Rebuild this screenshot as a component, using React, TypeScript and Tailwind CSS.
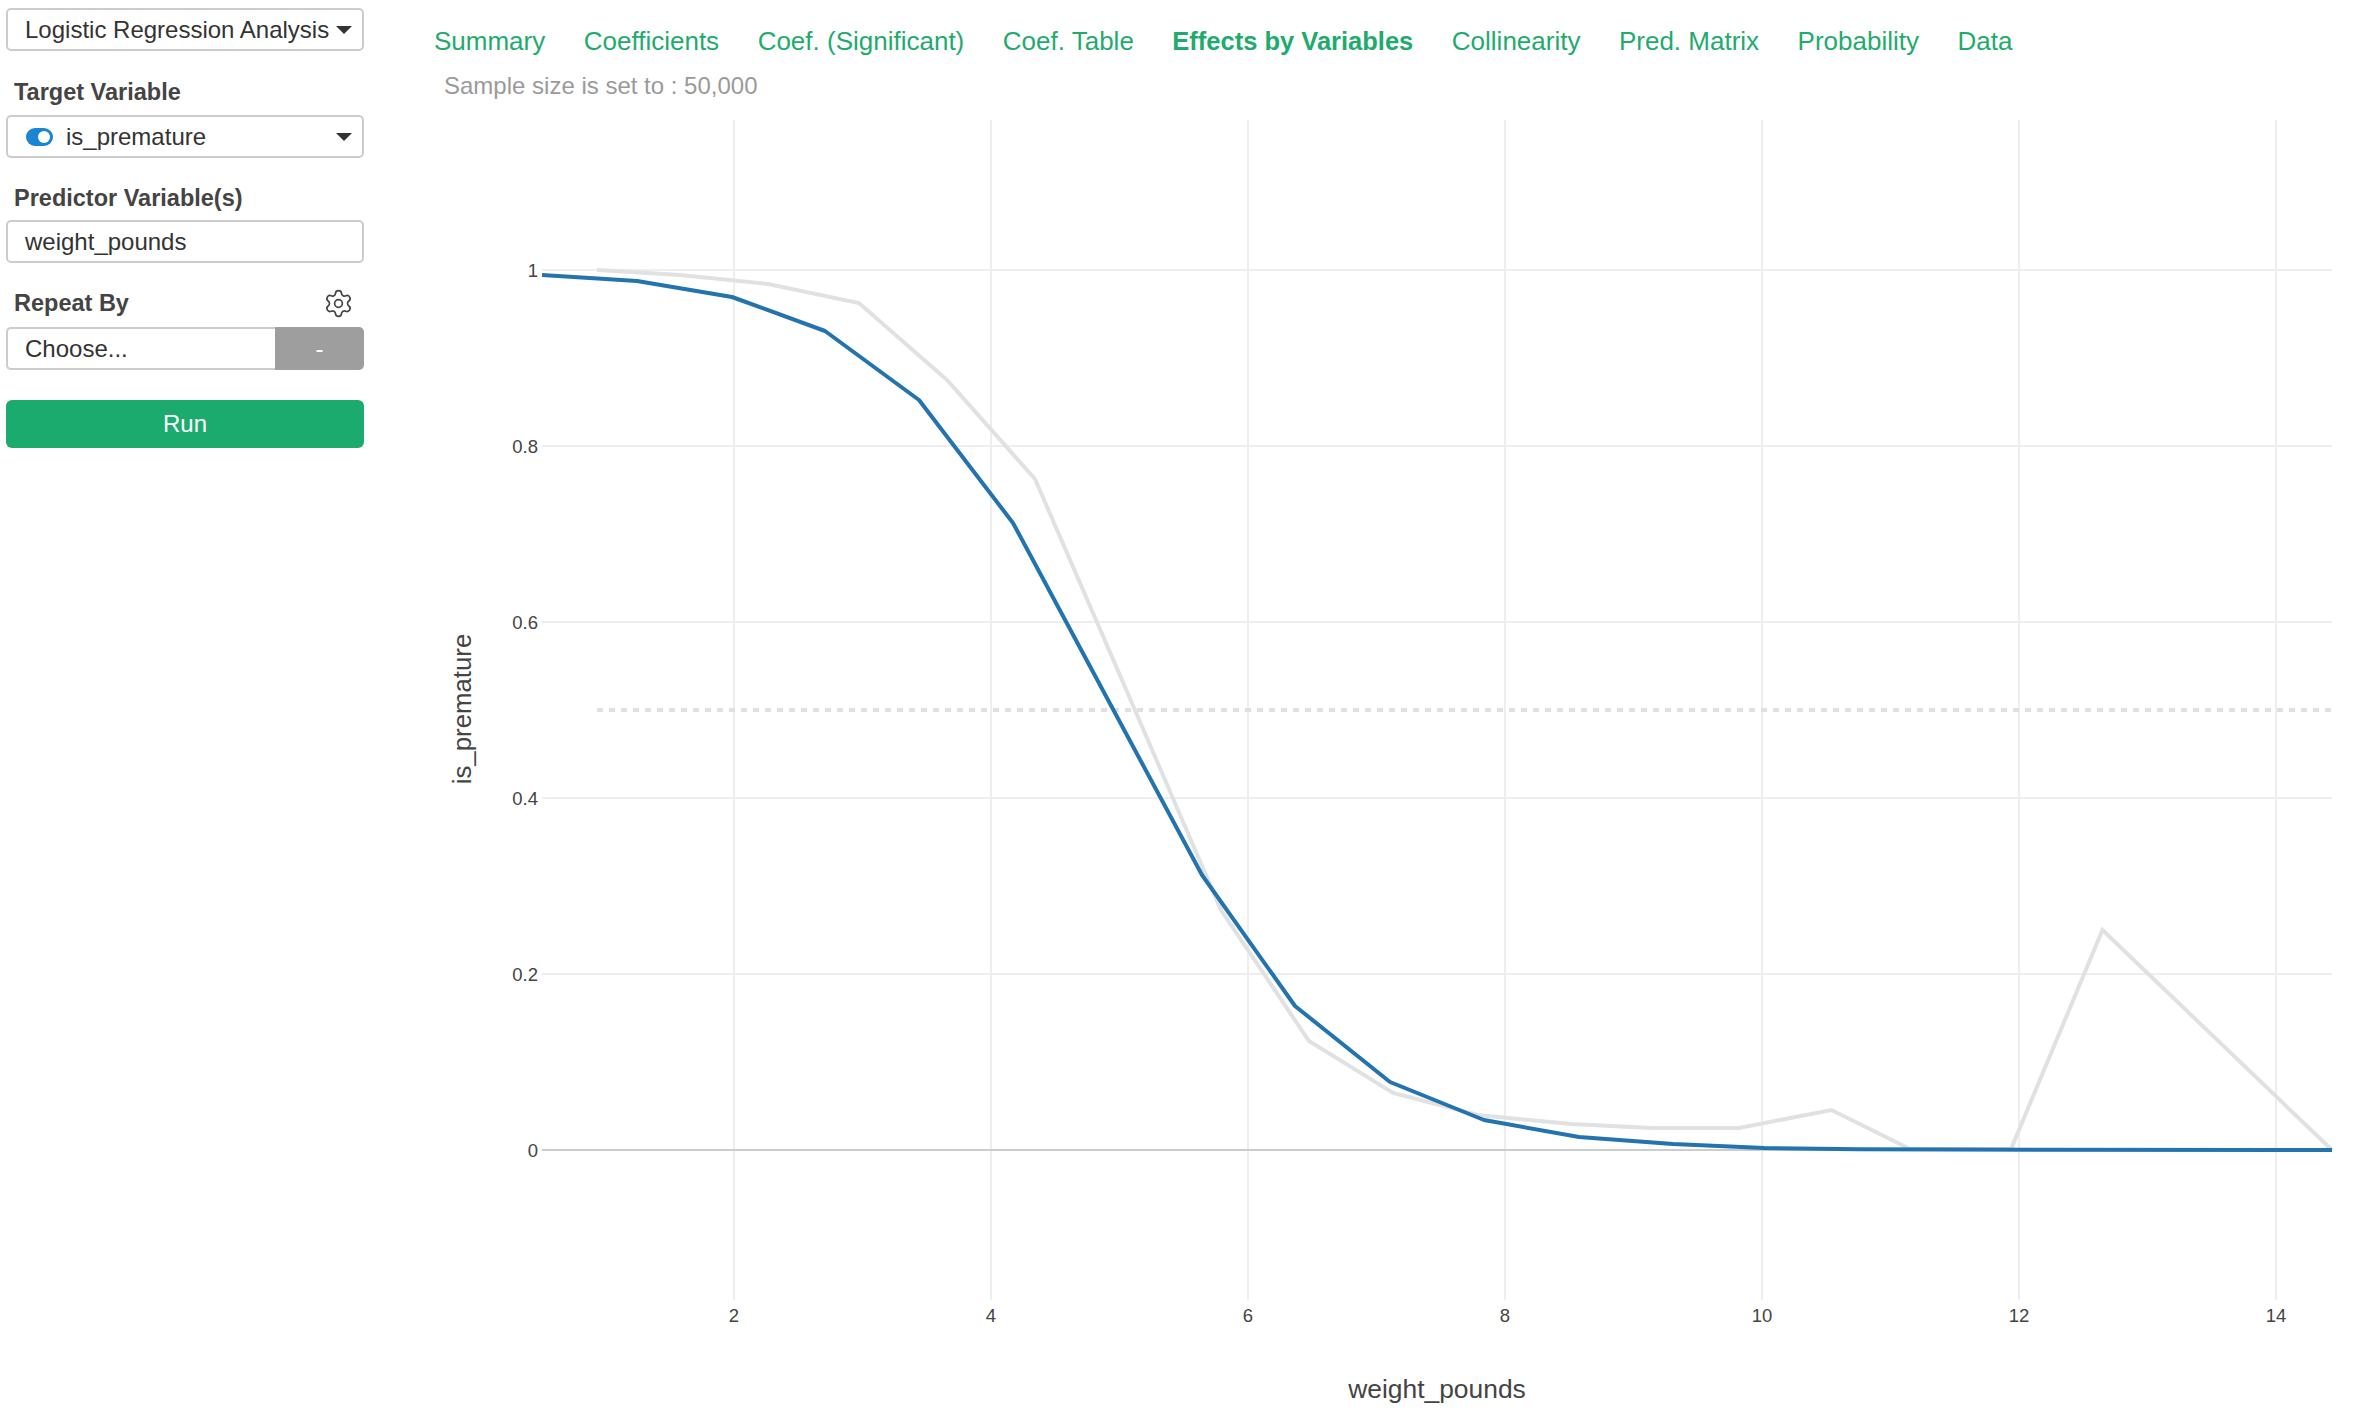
import React from 'react';
import { Settings } from 'lucide-react';

const tabs = ['Summary', 'Coefficients', 'Coef. (Significant)', 'Coef. Table', 'Effects by Variables', 'Collinearity', 'Pred. Matrix', 'Probability', 'Data'];

const xTicks = [
  { label: '2', x: 734 },
  { label: '4', x: 991 },
  { label: '6', x: 1248 },
  { label: '8', x: 1505 },
  { label: '10', x: 1762 },
  { label: '12', x: 2019 },
  { label: '14', x: 2276 },
];

const yTicks = [
  { label: '1', y: 270 },
  { label: '0.8', y: 446 },
  { label: '0.6', y: 622 },
  { label: '0.4', y: 798 },
  { label: '0.2', y: 974 },
];

const predicted = '542,275 637,281 732,297 825,331 919,400 1013,523 1107,698 1202,875 1295,1006 1390,1082 1484,1120 1579,1137 1673,1144 1764,1148 1858,1149.3 1950,1149.6 2332,1150';
const actual = '597,270 680,275 768,284 859,303 947,380 1035,479 1122,680 1221,910 1309,1041 1393,1093 1478,1115 1571,1124 1651,1128 1739,1128 1831.5,1110 1910,1149 2011,1149 2102.5,930 2332,1150';

const Caret = () => (
  <svg width="16" height="8" viewBox="0 0 16 8" className="shrink-0">
    <path d="M0 0h16L8 8z" fill="#333333" />
  </svg>
);

const Label: React.FC<{ children: React.ReactNode }> = ({ children }) => (
  <div className="text-[23.5px] leading-[30px] font-bold text-[#444444] pl-[8px]">{children}</div>
);

const Chart = () => (
  <svg viewBox="400 110 1962 1302" width="1962" height="1302" className="block" style={{ fontFamily: '"Liberation Sans", Arial, sans-serif' }}>
    {xTicks.map((t) => (
      <line key={t.x} x1={t.x} x2={t.x} y1="120" y2="1300" stroke="#eeeeee" strokeWidth="2" />
    ))}
    {yTicks.map((t) => (
      <line key={t.y} x1="542" x2="2332" y1={t.y} y2={t.y} stroke="#eeeeee" strokeWidth="2" />
    ))}
    <line x1="542" x2="2332" y1="1150" y2="1150" stroke="#cccccc" strokeWidth="2" />

    {yTicks.map((t) => (
      <text key={t.label} x="538" y={t.y + 6.5} textAnchor="end" fontSize="18.5" fill="#444444">{t.label}</text>
    ))}
    <text x="538" y="1156.5" textAnchor="end" fontSize="18.5" fill="#444444">0</text>
    {xTicks.map((t) => (
      <text key={t.label} x={t.x} y="1321.5" textAnchor="middle" fontSize="18.5" fill="#444444">{t.label}</text>
    ))}

    <text x="1437" y="1398" textAnchor="middle" fontSize="26.4" fill="#444444">weight_pounds</text>
    <text transform="translate(471 709) rotate(-90)" textAnchor="middle" fontSize="25.8" fill="#444444">is_premature</text>

    <line x1="597" x2="2332" y1="710" y2="710" stroke="#dfe0e2" strokeWidth="4" strokeDasharray="6 6" />
    <polyline points={actual} fill="none" stroke="#e0e1e3" strokeWidth="4" strokeLinejoin="miter" />
    <polyline points={predicted} fill="none" stroke="#2273ae" strokeWidth="4" strokeLinejoin="round" />
  </svg>
);

export default function App() {
  return (
    <div className="flex h-[1412px] w-[2362px] overflow-hidden bg-white text-[#333333] font-['Liberation_Sans',Arial,sans-serif]">
      {/* Side panel */}
      <aside className="w-[400px] shrink-0 pl-[6px] pt-[8px]">
        <div className="w-[358px]">
          <div className="flex h-[43px] items-center justify-between rounded-[5px] border-2 border-[#cccccc] pl-[17px] pr-[10px] text-[24px]">
            <span>Logistic Regression Analysis</span>
            <Caret />
          </div>

          <div className="mt-[26px] mb-[8px]"><Label>Target Variable</Label></div>
          <div className="flex h-[43px] items-center justify-between rounded-[5px] border-2 border-[#cccccc] pl-[18px] pr-[10px] text-[24px]">
            <span className="flex items-center gap-[13px]">
              <span className="flex h-[18px] w-[27px] items-center justify-end rounded-full bg-[#1a85d0] pr-[3px]">
                <span className="h-[12px] w-[12px] rounded-full bg-white" />
              </span>
              <span>is_premature</span>
            </span>
            <Caret />
          </div>

          <div className="mt-[25px] mb-[7px]"><Label>Predictor Variable(s)</Label></div>
          <div className="flex h-[43px] items-center rounded-[5px] border-2 border-[#cccccc] pl-[17px] text-[24px]">weight_pounds</div>

          <div className="mt-[25px] mb-[9px] flex h-[30px] items-center justify-between pr-[10px]">
            <Label>Repeat By</Label>
            <Settings size={31} strokeWidth={1.3} color="#444444" />
          </div>
          <div className="flex h-[43px] text-[24px]">
            <div className="flex flex-1 items-center rounded-l-[5px] border-2 border-r-0 border-[#cccccc] pl-[17px]">Choose...</div>
            <div className="flex w-[89px] items-center justify-center rounded-r-[5px] bg-[#9e9e9e] text-white">-</div>
          </div>

          <button className="mt-[30px] flex h-[48px] w-full items-center justify-center rounded-[6px] bg-[#1bab6f] text-[24px] text-white">Run</button>
        </div>
      </aside>

      {/* Report area */}
      <main className="flex-1">
        <nav className="flex gap-[38.5px] pl-[34px] pt-[22px] text-[26px] leading-[38px] text-[#1fab6e]">
          {tabs.map((tab) => (
            <span key={tab} className={tab === 'Effects by Variables' ? 'font-bold text-[25.5px]' : ''}>{tab}</span>
          ))}
        </nav>
        <div className="mt-[11px] mb-[9px] pl-[44px] text-[24px] leading-[30px] text-[#9a9a9a]">Sample size is set to : 50,000</div>
        <Chart />
      </main>
    </div>
  );
}
